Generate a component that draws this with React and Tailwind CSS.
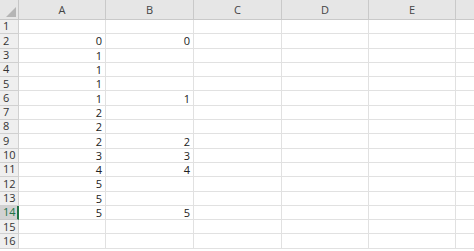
const cols = ['A', 'B', 'C', 'D', 'E', ''];

const data = {
  2: ['0', '0'],
  3: ['1', ''],
  4: ['1', ''],
  5: ['1', ''],
  6: ['1', '1'],
  7: ['2', ''],
  8: ['2', ''],
  9: ['2', '2'],
  10: ['3', '3'],
  11: ['4', '4'],
  12: ['5', ''],
  13: ['5', ''],
  14: ['5', '5'],
};

const rows = Array.from({ length: 16 }, (_, i) => i + 1);

export default function App() {
  return (
    <div
      className="w-[474px] h-[251px] overflow-hidden bg-white text-[11px] text-[#222]"
      style={{ fontFamily: '"Open Sans", "Noto Sans", sans-serif' }}
    >
      <div className="grid grid-cols-[19px_87px_88px_88px_87px_87px_87px] grid-rows-[20px_repeat(16,14.3px)]">
        {/* corner */}
        <div className="relative bg-[#e6e6e6] border-r border-b border-[#c6c6c6]">
          <svg className="absolute right-[2px] bottom-[2px]" width="10" height="10" viewBox="0 0 10 10">
            <polygon points="10,0 10,10 0,10" fill="#b5b5b5" />
          </svg>
        </div>
        {cols.map((c, i) => (
          <div
            key={'h' + i}
            className="flex items-center justify-center bg-[#e6e6e6] border-r border-b border-[#c9c9c9] text-[#444] pt-[1px]"
          >
            {c}
          </div>
        ))}

        {rows.map((r) => {
          const sel = r === 14;
          const vals = data[r] || ['', ''];
          return [
            <div
              key={'r' + r}
              className={
                sel
                  ? 'flex items-center pl-[3px] bg-[#d2d2d2] border-r-2 border-r-[#217346] border-b border-b-[#c6c6c6] text-[#217346] text-[11px]'
                  : 'flex items-center pl-[3px] bg-[#efefef] border-r border-b border-[#d0d0d0] text-[#333] text-[11px]'
              }
            >
              {r}
            </div>,
            ...cols.map((c, i) => (
              <div
                key={r + '-' + i}
                className="flex items-center justify-end pr-[3px] border-r border-b border-[#e1e1e1] leading-none"
              >
                {i < 2 ? vals[i] : ''}
              </div>
            )),
          ];
        })}
      </div>
    </div>
  );
}
